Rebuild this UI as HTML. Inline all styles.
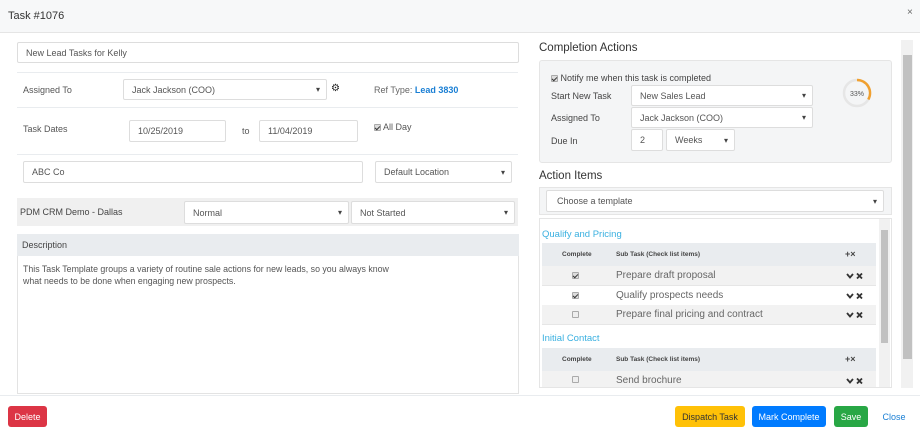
<!DOCTYPE html>
<html><head><style>
*{box-sizing:border-box;margin:0;padding:0}
body{width:920px;height:434px;position:relative;overflow:hidden;background:#fff;font-family:"Liberation Sans",sans-serif;font-size:9px;color:#555}
.a{position:absolute}
.in{position:absolute;border:1px solid #ddd;background:#fff;border-radius:2px;padding-left:8px;display:flex;align-items:center;color:#555;font-size:9px}
.sel:after{content:"\25BE";position:absolute;right:6px;font-size:8px;color:#444}
.hr{position:absolute;height:1px;background:#e9ecef}
.cb{display:inline-block;width:7px;height:7px;border:1px solid #aaa;border-radius:1px;background:#ddd;position:relative;vertical-align:middle}
.cb.on:after{content:"";position:absolute;left:1px;top:0px;width:2px;height:4px;border:solid #333;border-width:0 1.5px 1.5px 0;transform:rotate(45deg)}
.btn{position:absolute;top:406px;height:21px;border-radius:3px;color:#fff;font-size:9px;display:flex;align-items:center;justify-content:center}
.row{position:absolute;left:542px;width:334px;height:20px;border-bottom:1px solid #e6e6e6}
.row .t{position:absolute;left:74px;top:4px;font-size:10px;color:#666}
.row .c{position:absolute;left:30px;top:6px}
.row .ic{position:absolute;left:304px;top:6px}
.th{position:absolute;left:542px;width:334px;height:23px;background:#e9ecef;font-size:6.5px;font-weight:bold;color:#444}
</style></head><body>
<div class="a" style="left:0;top:0;width:920px;height:33px;background:#f7f8f9;border-bottom:1px solid #e5e5e5"></div>
<div class="a" style="left:8px;top:10px;font-size:11px;color:#333">Task #1076</div>
<div class="a" style="left:907px;top:7px;font-size:10px;color:#666">×</div>

<div class="in" style="left:17px;top:42px;width:502px;height:21px">New Lead Tasks for Kelly</div>
<div class="hr" style="left:17px;top:72px;width:501px"></div>
<div class="a" style="left:23px;top:85px">Assigned To</div>
<div class="in sel" style="left:123px;top:79px;width:204px;height:21px">Jack Jackson (COO)</div>
<div class="a" style="left:331px;top:83px;font-size:10px;color:#222">⚙</div>
<div class="a" style="left:374px;top:85px;color:#666">Ref Type: <b style="color:#1a7fd4">Lead 3830</b></div>
<div class="hr" style="left:17px;top:107px;width:501px"></div>
<div class="a" style="left:23px;top:124px">Task Dates</div>
<div class="in" style="left:129px;top:120px;width:97px;height:22px">10/25/2019</div>
<div class="a" style="left:242px;top:126px">to</div>
<div class="in" style="left:259px;top:120px;width:99px;height:22px">11/04/2019</div>
<div class="a" style="left:374px;top:122px"><span class="cb on"></span> All Day</div>
<div class="hr" style="left:17px;top:154px;width:501px"></div>
<div class="in" style="left:23px;top:161px;width:340px;height:22px">ABC Co</div>
<div class="in sel" style="left:375px;top:161px;width:137px;height:22px">Default Location</div>
<div class="a" style="left:17px;top:198px;width:501px;height:28px;background:#f0f0f0"></div>
<div class="a" style="left:20px;top:207px;color:#444">PDM CRM Demo - Dallas</div>
<div class="in sel" style="left:184px;top:201px;width:165px;height:23px">Normal</div>
<div class="in sel" style="left:351px;top:201px;width:164px;height:23px">Not Started</div>
<div class="a" style="left:17px;top:234px;width:502px;height:160px;border:1px solid #e3e3e3"></div>
<div class="a" style="left:17px;top:234px;width:502px;height:22px;background:#e9ecef"></div>
<div class="a" style="left:22px;top:240px;color:#444">Description</div>
<div class="a" style="left:23px;top:263px;line-height:12px;color:#555;font-size:8.8px">This Task Template groups a variety of routine sale actions for new leads, so you always know<br>what needs to be done when engaging new prospects.</div>

<div class="a" style="left:539px;top:42px;font-size:11.5px;color:#333">Completion Actions</div>
<div class="a" style="left:539px;top:60px;width:353px;height:103px;background:#f4f5f6;border:1px solid #e5e5e5;border-radius:3px"></div>
<div class="a" style="left:551px;top:73px;color:#444"><span class="cb on"></span> Notify me when this task is completed</div>
<div class="a" style="left:551px;top:91px;color:#444">Start New Task</div>
<div class="in sel" style="left:631px;top:85px;width:182px;height:21px">New Sales Lead</div>
<div class="a" style="left:551px;top:113px;color:#444">Assigned To</div>
<div class="in sel" style="left:631px;top:107px;width:182px;height:21px">Jack Jackson (COO)</div>
<div class="a" style="left:551px;top:136px;color:#444">Due In</div>
<div class="in" style="left:631px;top:129px;width:32px;height:22px">2</div>
<div class="in sel" style="left:666px;top:129px;width:69px;height:22px">Weeks</div>
<svg class="a" style="left:842px;top:78px" width="30" height="30"><circle cx="15" cy="15" r="13" fill="none" stroke="#e6e6e6" stroke-width="2.5"/><path d="M15 2 A13 13 0 0 1 26.3 21.5" fill="none" stroke="#f0a030" stroke-width="2.5"/><text x="15" y="18" font-size="7" text-anchor="middle" fill="#555" font-family="Liberation Sans">33%</text></svg>

<div class="a" style="left:539px;top:170px;font-size:11.5px;color:#333">Action Items</div>
<div class="a" style="left:539px;top:187px;width:353px;height:28px;background:#f4f5f6;border:1px solid #e5e5e5"></div>
<div class="in sel" style="left:546px;top:190px;width:338px;height:22px;padding-left:10px">Choose a template</div>
<div class="a" style="left:539px;top:218px;width:353px;height:170px;border:1px solid #e5e5e5"></div>
<div class="a" style="left:879px;top:219px;width:11px;height:168px;background:#f1f1f1"></div>
<div class="a" style="left:881px;top:230px;width:7px;height:113px;background:#c1c1c1"></div>
<div class="a" style="left:542px;top:229px;font-size:9.5px;color:#3ab0e0">Qualify and Pricing</div>
<div class="th" style="top:243px"><span class="a" style="left:20px;top:8px">Complete</span><span class="a" style="left:74px;top:8px">Sub Task (Check list items)</span><span class="a" style="left:303px;top:6px;font-size:9px">+×</span></div>
<div class="row" style="top:266px;background:#f2f2f2"><span class="c cb on"></span><span class="t">Prepare draft proposal</span><svg class="ic" width="18" height="8"><path d="M1 2 L4 5.5 L7 2" fill="none" stroke="#333" stroke-width="1.8"/><path d="M11 1.5 L16 6.5 M16 1.5 L11 6.5" stroke="#333" stroke-width="1.8"/></svg></div>
<div class="row" style="top:286px"><span class="c cb on"></span><span class="t">Qualify prospects needs</span><svg class="ic" width="18" height="8"><path d="M1 2 L4 5.5 L7 2" fill="none" stroke="#333" stroke-width="1.8"/><path d="M11 1.5 L16 6.5 M16 1.5 L11 6.5" stroke="#333" stroke-width="1.8"/></svg></div>
<div class="row" style="top:305px;background:#f2f2f2"><span class="c cb" style="background:#eee"></span><span class="t">Prepare final pricing and contract</span><svg class="ic" width="18" height="8"><path d="M1 2 L4 5.5 L7 2" fill="none" stroke="#333" stroke-width="1.8"/><path d="M11 1.5 L16 6.5 M16 1.5 L11 6.5" stroke="#333" stroke-width="1.8"/></svg></div>
<div class="a" style="left:542px;top:333px;font-size:9.5px;color:#3ab0e0">Initial Contact</div>
<div class="th" style="top:348px"><span class="a" style="left:20px;top:8px">Complete</span><span class="a" style="left:74px;top:8px">Sub Task (Check list items)</span><span class="a" style="left:303px;top:6px;font-size:9px">+×</span></div>
<div class="row" style="top:371px;height:16px;background:#f2f2f2;border:0"><span class="c cb" style="background:#eee;top:5px"></span><span class="t">Send brochure</span><svg class="ic" width="18" height="8"><path d="M1 2 L4 5.5 L7 2" fill="none" stroke="#333" stroke-width="1.8"/><path d="M11 1.5 L16 6.5 M16 1.5 L11 6.5" stroke="#333" stroke-width="1.8"/></svg></div>

<div class="a" style="left:901px;top:40px;width:12px;height:348px;background:#f1f1f1"></div>
<div class="a" style="left:903px;top:55px;width:9px;height:304px;background:#c1c1c1"></div>

<div class="a" style="left:0;top:395px;width:920px;height:1px;background:#e9ecef"></div>
<div class="btn" style="left:8px;width:39px;background:#dc3545">Delete</div>
<div class="btn" style="left:675px;width:70px;background:#ffc107;color:#333">Dispatch Task</div>
<div class="btn" style="left:752px;width:74px;background:#007bff">Mark Complete</div>
<div class="btn" style="left:834px;width:34px;background:#28a745">Save</div>
<div class="btn" style="left:876px;width:36px;color:#1a7fd4">Close</div>
</body></html>
